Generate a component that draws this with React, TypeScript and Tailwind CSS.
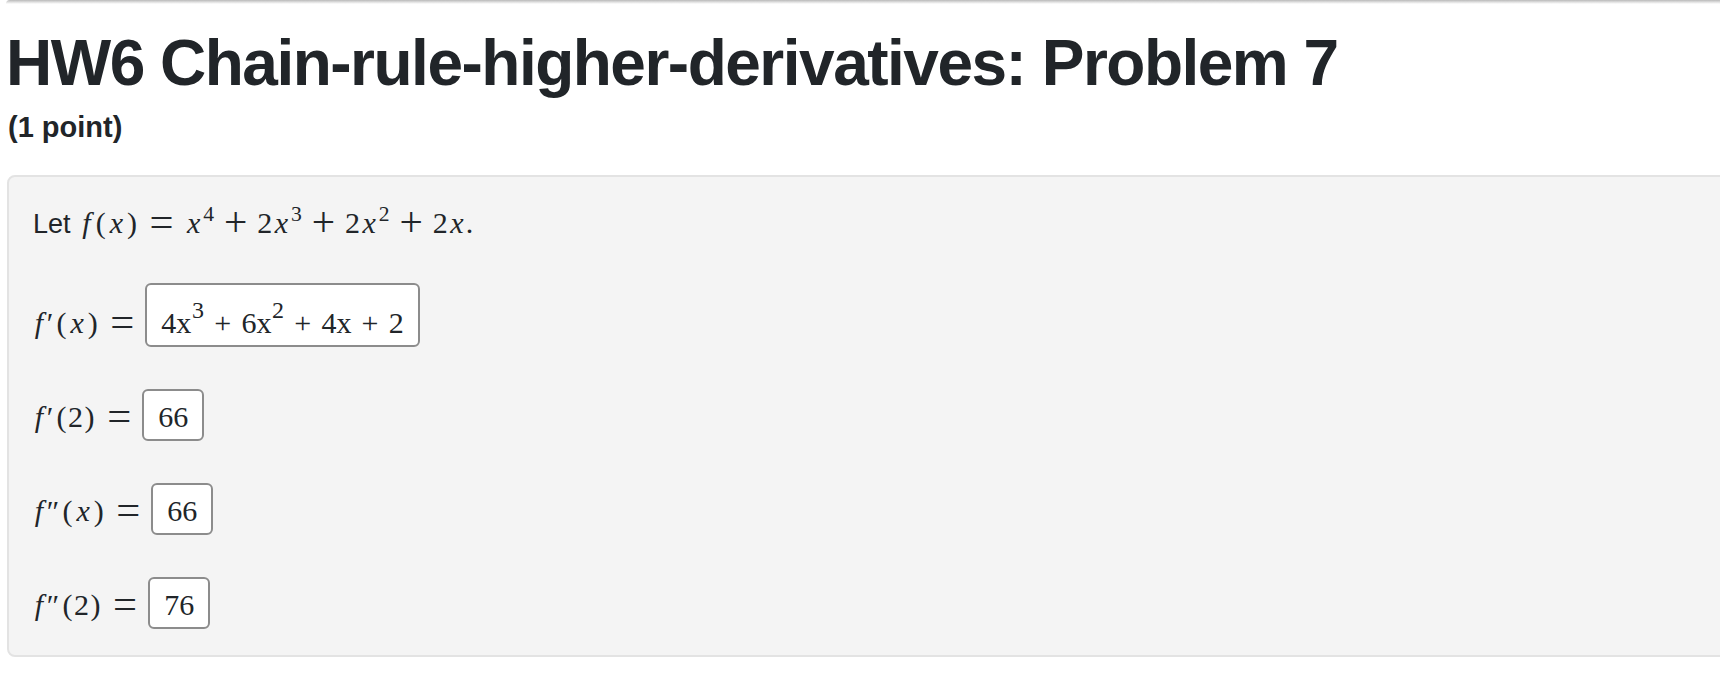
import type { ReactNode } from "react";

const serif = "font-['Liberation_Serif','Times_New_Roman',serif]";

// italic math letter, padded to roughly the width of the TeX math italic
function V({ children, f = false }: { children: ReactNode; f?: boolean }) {
  return <span className={f ? "ml-[0.06em] mr-[0.12em] italic" : "mx-[0.08em] italic"}>{children}</span>;
}

function P({ children }: { children: ReactNode }) {
  return <span className="mx-[0.05em]">{children}</span>;
}

function Prime({ children }: { children: ReactNode }) {
  return <span className="mr-[0.06em]">{children}</span>;
}

function Sup({ children, big = false }: { children: ReactNode; big?: boolean }) {
  return (
    <span className={`ml-[0.03em] leading-none ${big ? "align-[0.62em] text-[0.8em]" : "align-[0.55em] text-[0.72em]"}`}>
      {children}
    </span>
  );
}

// TeX-sized relation / binary operator
function Op({ children, wide = false }: { children: ReactNode; wide?: boolean }) {
  return (
    <span
      className={`align-[-0.07em] leading-none ${wide ? "mx-[0.26em] text-[1.42em]" : "mx-[0.24em] text-[1.38em]"}`}
    >
      {children}
    </span>
  );
}

// plain operator as typed in the answer boxes
function BoxOp({ children }: { children: ReactNode }) {
  return <span className="mx-[0.34em]">{children}</span>;
}

function Math({ children }: { children: ReactNode }) {
  return <span className={`${serif} text-[30px] leading-none`}>{children}</span>;
}

function AnswerBox({ children, tall = false }: { children: ReactNode; tall?: boolean }) {
  return (
    <div
      className={`${serif} inline-block whitespace-nowrap rounded-[6px] border-2 border-[#8c8c8c] bg-white px-[14px] text-[30px] leading-[48px] ${
        tall ? "h-[64px] pt-[13px]" : "h-[52px] pt-[2px]"
      }`}
    >
      {children}
    </div>
  );
}

function Label({ children }: { children: ReactNode }) {
  return (
    <Math>
      {children}
      <Op wide>=</Op>
    </Math>
  );
}

export default function App() {
  return (
    <div className="h-[676px] w-[1720px] overflow-hidden bg-white font-['Liberation_Sans',Arial,sans-serif] text-[#212529]">
      <div className="ml-[6px] h-[4px] rounded-tl-[4px] bg-gradient-to-b from-[#b9b9b9] via-[#dedede] to-white" />

      <h1 className="mt-[21px] pl-[6px] text-[64px] font-bold leading-[1.2] tracking-[-1.5px]">
        HW6 Chain-rule-higher-derivatives: Problem 7
      </h1>
      <div className="mt-[4px] pl-[8px] text-[29px] font-bold leading-[42px]">(1 point)</div>

      <div className="ml-[7px] mt-[27px] w-[1760px] rounded-[8px] border-2 border-[#e3e3e3] bg-[#f4f4f4] pb-[26px] pl-[24px] pt-[15px]">
        <div className="h-[64px] whitespace-nowrap text-[27px] leading-[64px]">
          <span className="mr-[10px]">Let</span>
          <Math>
            <V f>f</V>
            <P>(</P>
            <V>x</V>
            <P>)</P>
            <Op wide>=</Op>
            <V>x</V>
            <Sup>4</Sup>
            <Op>+</Op>2<V>x</V>
            <Sup>3</Sup>
            <Op>+</Op>2<V>x</V>
            <Sup>2</Sup>
            <Op>+</Op>2<V>x</V>.
          </Math>
        </div>

        <div className="mt-[27px] flex items-baseline">
          <Label>
            <V f>f</V>
            <Prime>′</Prime>
            <P>(</P>
            <V>x</V>
            <P>)</P>
          </Label>
          <AnswerBox tall>
            4x<Sup big>3</Sup>
            <BoxOp>+</BoxOp>6x<Sup big>2</Sup>
            <BoxOp>+</BoxOp>4x<BoxOp>+</BoxOp>2
          </AnswerBox>
        </div>

        <div className="mt-[42px] flex items-baseline">
          <Label>
            <V f>f</V>
            <Prime>′</Prime>
            <P>(</P>2<P>)</P>
          </Label>
          <AnswerBox>66</AnswerBox>
        </div>

        <div className="mt-[42px] flex items-baseline">
          <Label>
            <V f>f</V>
            <Prime>″</Prime>
            <P>(</P>
            <V>x</V>
            <P>)</P>
          </Label>
          <AnswerBox>66</AnswerBox>
        </div>

        <div className="mt-[42px] flex items-baseline">
          <Label>
            <V f>f</V>
            <Prime>″</Prime>
            <P>(</P>2<P>)</P>
          </Label>
          <AnswerBox>76</AnswerBox>
        </div>
      </div>
    </div>
  );
}
